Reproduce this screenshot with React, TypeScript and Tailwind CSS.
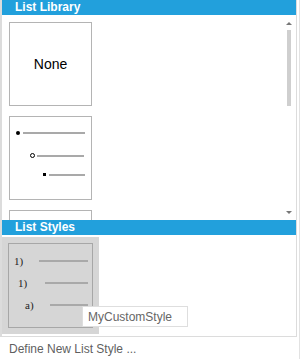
import React from "react";

const Line = ({ w }: { w: number }) => (
  <div className="h-[2px] bg-[#a9a9a9]" style={{ width: w }} />
);

export default function App() {
  return (
    <div
      className="relative w-[301px] h-[359px] bg-white"
      style={{ fontFamily: '"Liberation Sans", Arial, sans-serif' }}
    >
      <div className="h-full w-[300px] border-r border-[#e2e2e2]">
        <div className="w-[297px] border-l-2 border-r border-b border-[#dcdcdc] bg-white">
          {/* List Library header */}
          <div className="h-[15px] bg-[#22a0dc] pl-[13px] text-[12px] font-bold leading-[15px] text-white">
            List Library
          </div>
          {/* scroll area */}
          <div className="flex h-[205px] overflow-hidden">
            <div className="flex flex-1 flex-col gap-[10px] pl-[7px] pt-[7px]">
              <div className="flex h-[84px] w-[83px] shrink-0 items-center justify-center border border-[#b4b4b4] text-[14px] text-black">
                None
              </div>
              <div className="flex h-[84px] w-[83px] shrink-0 flex-col border border-[#b4b4b4] pt-[14px]">
                <div className="flex items-center pl-[6px]">
                  <div className="h-[4px] w-[4px] rounded-full bg-black" />
                  <div className="ml-[3px] h-[2px] w-[62px] bg-[#a9a9a9]" />
                </div>
                <div className="mt-[18px] flex items-center pl-[20px]">
                  <div className="h-[5px] w-[5px] rounded-full border border-black" />
                  <div className="ml-[2px] h-[2px] w-[47px] bg-[#a9a9a9]" />
                </div>
                <div className="mt-[15px] flex items-center pl-[33px]">
                  <div className="h-[3px] w-[3px] bg-black" />
                  <div className="ml-[3px] h-[2px] w-[36px] bg-[#a9a9a9]" />
                </div>
              </div>
              <div className="h-[84px] w-[83px] shrink-0 border border-[#b4b4b4]" />
            </div>
            {/* scrollbar */}
            <div className="flex w-[11px] flex-col items-center pt-[7px] pr-[4px]">
              <div className="h-0 w-0 border-x-[3px] border-b-[3px] border-x-transparent border-b-[#777]" />
              <div className="mt-[5px] h-[76px] w-[4px] bg-[#cfcfcf]" />
              <div className="flex-1" />
              <div className="mb-[6px] h-0 w-0 border-x-[3px] border-t-[3px] border-x-transparent border-t-[#777]" />
            </div>
          </div>
          {/* List Styles header */}
          <div className="h-[15px] bg-[#22a0dc] pl-[13px] text-[12px] font-bold leading-[15px] text-white">
            List Styles
          </div>
          <div className="h-[101px] pt-[2px]">
            <div className="h-[97px] w-[97px] bg-[#d6d6d6] p-[6px]">
              <div
                className="flex h-full w-full flex-col border border-[#a7a7a7] pt-[12px] text-[11px] text-[#222]"
                style={{ fontFamily: '"Liberation Serif", "Times New Roman", serif' }}
              >
                <div className="flex items-center pl-[5px] leading-[10px]">
                  <span className="w-[25px]">1)</span>
                  <Line w={49} />
                </div>
                <div className="mt-[12px] flex items-center pl-[9px] leading-[10px]">
                  <span className="w-[27px]">1)</span>
                  <Line w={43} />
                </div>
                <div className="mt-[12px] flex items-center pl-[16px] leading-[10px]">
                  <span className="w-[25px]">a)</span>
                  <Line w={38} />
                </div>
              </div>
            </div>
          </div>
        </div>
        <div className="pl-[9px] pt-[3px] text-[12px] text-[#5f5f5f]">
          Define New List Style ...
        </div>
      </div>
      {/* tooltip */}
      <div className="absolute left-[82px] top-[306px] flex h-[21px] w-[106px] items-center border border-[#dedede] bg-white pl-[5px] text-[12px] text-[#666]">
        MyCustomStyle
      </div>
    </div>
  );
}
